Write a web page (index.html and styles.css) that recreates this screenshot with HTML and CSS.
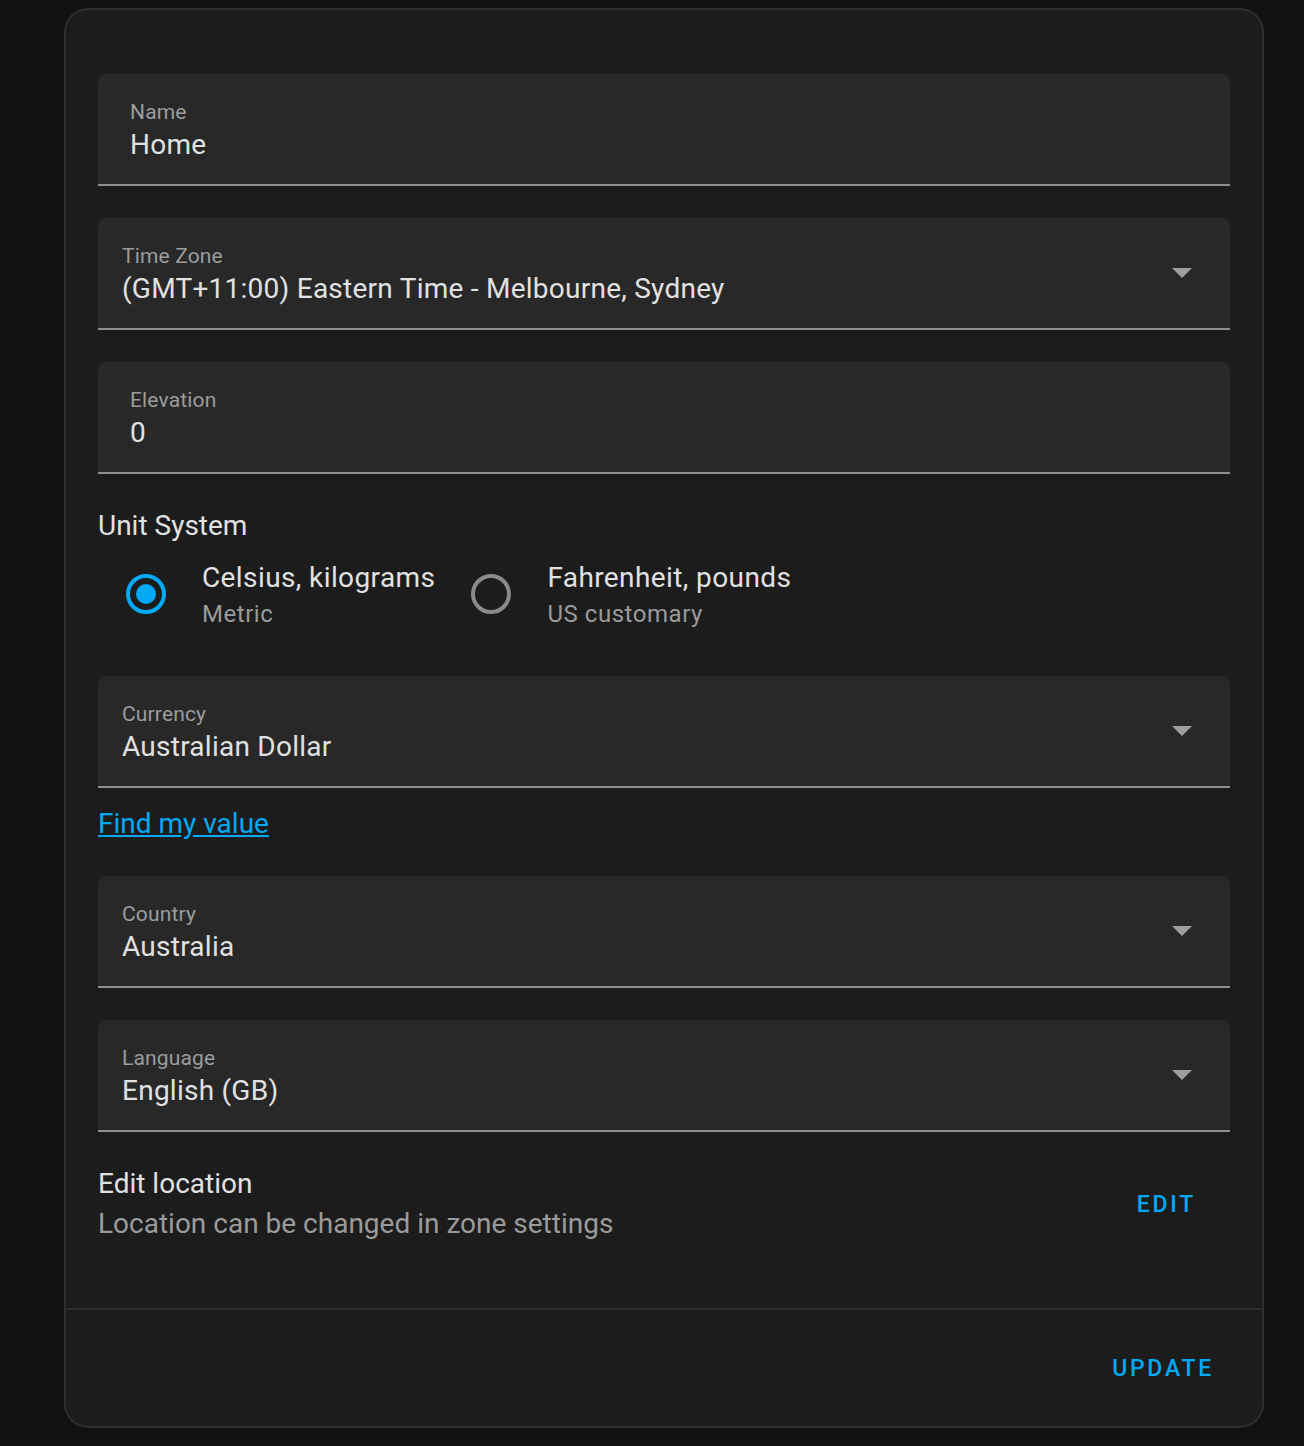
FILE: index.html
```html
<!DOCTYPE html>
<html lang="en">
<head>
<meta charset="utf-8">
<title>General settings</title>
<link rel="stylesheet" href="styles.css">
</head>
<body>
<div class="card">
  <div class="card-content">
    <div class="field text-field f-name">
      <div class="field-text">
        <div class="label">Name</div>
        <div class="value">Home</div>
      </div>
    </div>
    <div class="field select-field f-gap">
      <div class="field-text">
        <div class="label">Time Zone</div>
        <div class="value">(GMT+11:00) Eastern Time - Melbourne, Sydney</div>
      </div>
      <span class="arrow"></span>
    </div>
    <div class="field text-field f-gap">
      <div class="field-text">
        <div class="label">Elevation</div>
        <div class="value">0</div>
      </div>
    </div>
    <div class="unit-title">Unit System</div>
    <div class="radio-row">
      <div class="radio-item">
        <span class="radio checked"></span>
        <div class="radio-text">
          <div class="radio-primary">Celsius, kilograms</div>
          <div class="radio-secondary">Metric</div>
        </div>
      </div>
      <div class="radio-item">
        <span class="radio"></span>
        <div class="radio-text">
          <div class="radio-primary">Fahrenheit, pounds</div>
          <div class="radio-secondary">US customary</div>
        </div>
      </div>
    </div>
    <div class="field select-field f-currency">
      <div class="field-text">
        <div class="label">Currency</div>
        <div class="value">Australian Dollar</div>
      </div>
      <span class="arrow"></span>
    </div>
    <a class="find-link" href="#">Find my value</a>
    <div class="field select-field f-country">
      <div class="field-text">
        <div class="label">Country</div>
        <div class="value">Australia</div>
      </div>
      <span class="arrow"></span>
    </div>
    <div class="field select-field f-gap">
      <div class="field-text">
        <div class="label">Language</div>
        <div class="value">English (GB)</div>
      </div>
      <span class="arrow"></span>
    </div>
    <div class="edit-row">
      <div class="edit-text">
        <div class="edit-title">Edit location</div>
        <div class="edit-desc">Location can be changed in zone settings</div>
      </div>
      <span class="text-button edit-button">Edit</span>
    </div>
  </div>
  <div class="card-actions">
    <span class="text-button update-button">Update</span>
  </div>
</div>
</body>
</html>
```

FILE: styles.css
```css
html, body {
  margin: 0;
  padding: 0;
  background: #111111;
}
body {
  font-family: Roboto, "Noto Sans", sans-serif;
  color: #e1e1e1;
  padding: 8px 0 18px 64px;
}
.card {
  width: 1200px;
  box-sizing: border-box;
  border: 2px solid #2f2f2f;
  border-radius: 24px;
  background: #1c1c1c;
  overflow: hidden;
}
.card-content {
  padding: 64px 32px 64px 32px;
}
.field {
  box-sizing: border-box;
  height: 112px;
  background: #282828;
  border-radius: 8px 8px 0 0;
  border-bottom: 2px solid #8f8f8f;
  display: flex;
  align-items: flex-start;
}
.f-gap { margin-top: 32px; }
.f-currency { margin-top: 46px; }
.f-country { margin-top: 34px; }
.field-text {
  flex: 1;
  padding-top: 26px;
}
.text-field .field-text { padding-left: 32px; }
.select-field .field-text { padding-left: 24px; }
.label {
  font-size: 21px;
  line-height: 24px;
  letter-spacing: 0.15px;
  color: #9c9c9c;
}
.value {
  margin-top: 3px;
  font-size: 28px;
  line-height: 36px;
  letter-spacing: 0.25px;
  color: #e1e1e1;
}
.arrow {
  align-self: center;
  width: 0;
  height: 0;
  border-left: 10px solid transparent;
  border-right: 10px solid transparent;
  border-top: 10px solid #9e9e9e;
  margin-right: 38px;
}
.unit-title {
  margin-top: 34px;
  font-size: 28px;
  line-height: 36px;
  color: #e1e1e1;
}
.radio-row {
  margin-top: 14px;
  height: 72px;
  display: flex;
  align-items: center;
  padding-left: 28px;
  gap: 36px;
}
.radio-item {
  display: flex;
  align-items: center;
  gap: 36px;
}
.radio {
  box-sizing: border-box;
  width: 40px;
  height: 40px;
  border-radius: 50%;
  border: 4px solid #8a8a8a;
  display: flex;
  align-items: center;
  justify-content: center;
}
.radio.checked {
  border-color: #03a9f4;
}
.radio.checked::after {
  content: "";
  width: 20px;
  height: 20px;
  border-radius: 50%;
  background: #03a9f4;
}
.radio-text {
  padding-top: 4px;
}
.radio-primary {
  font-size: 28px;
  line-height: 36px;
  letter-spacing: 0.4px;
  color: #e1e1e1;
}
.radio-secondary {
  font-size: 24px;
  line-height: 36px;
  letter-spacing: 0.55px;
  color: #9a9a9a;
}
.find-link {
  display: inline-block;
  margin-top: 18px;
  font-size: 28px;
  line-height: 36px;
  color: #03a9f4;
  text-decoration: underline;
}
.edit-row {
  margin-top: 32px;
  height: 80px;
  display: flex;
  align-items: center;
}
.edit-text { flex: 1; }
.edit-title {
  font-size: 28px;
  line-height: 40px;
  color: #e1e1e1;
}
.edit-desc {
  font-size: 28px;
  line-height: 40px;
  color: #9b9b9b;
}
.text-button {
  font-size: 23px;
  font-weight: 500;
  letter-spacing: 2.75px;
  text-transform: uppercase;
  color: #03a9f4;
}
.edit-button {
  margin-right: 34px;
}
.card-actions {
  border-top: 2px solid #2f2f2f;
  height: 116px;
  display: flex;
  align-items: center;
  justify-content: flex-end;
  padding-right: 48px;
}
```
